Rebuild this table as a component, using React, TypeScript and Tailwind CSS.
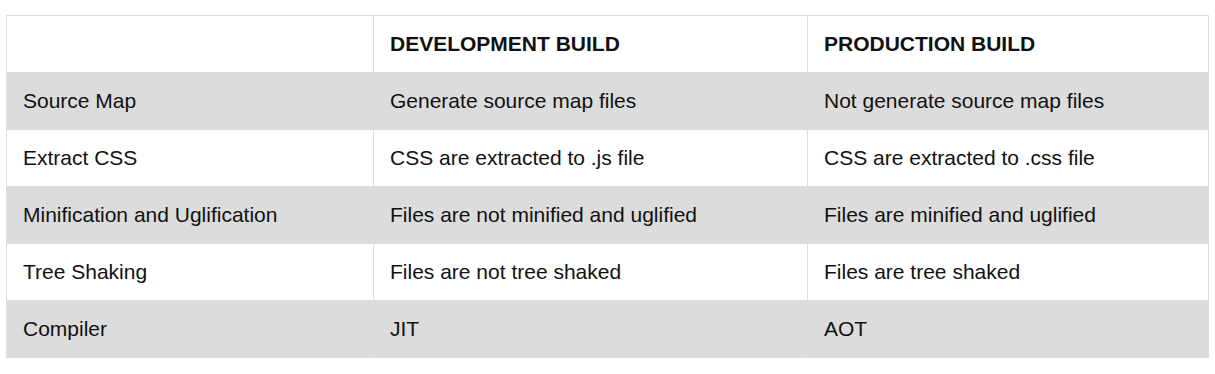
import React from "react";

const rows = [
  ["Source Map", "Generate source map files", "Not generate source map files"],
  ["Extract CSS", "CSS are extracted to .js file", "CSS are extracted to .css file"],
  ["Minification and Uglification", "Files are not minified and uglified", "Files are minified and uglified"],
  ["Tree Shaking", "Files are not tree shaked", "Files are tree shaked"],
  ["Compiler", "JIT", "AOT"],
];

export default function App() {
  return (
    <div
      className="w-[1215px] h-[374px] bg-white pt-[15px] pl-[6px]"
      style={{ fontFamily: '"Liberation Sans", Arial, sans-serif' }}
    >
      <table className="border-collapse border border-[#dddddd] text-[21px] leading-[24px] text-[#111111] w-[1203px] table-fixed">
        <colgroup>
          <col className="w-[367px]" />
          <col className="w-[434px]" />
          <col />
        </colgroup>
        <thead>
          <tr className="bg-white">
            <th className="border border-[#dddddd] px-4 py-4 text-left font-bold"></th>
            <th className="border border-[#dddddd] px-4 py-4 text-left font-bold">DEVELOPMENT BUILD</th>
            <th className="border border-[#dddddd] px-4 py-4 text-left font-bold">PRODUCTION BUILD</th>
          </tr>
        </thead>
        <tbody>
          {rows.map((r, i) => (
            <tr key={i} className={i % 2 === 0 ? "bg-[#dcdcdc]" : "bg-white"}>
              {r.map((c, j) => (
                <td key={j} className="border border-[#dddddd] px-4 py-4 text-left font-normal">
                  {c}
                </td>
              ))}
            </tr>
          ))}
        </tbody>
      </table>
    </div>
  );
}
